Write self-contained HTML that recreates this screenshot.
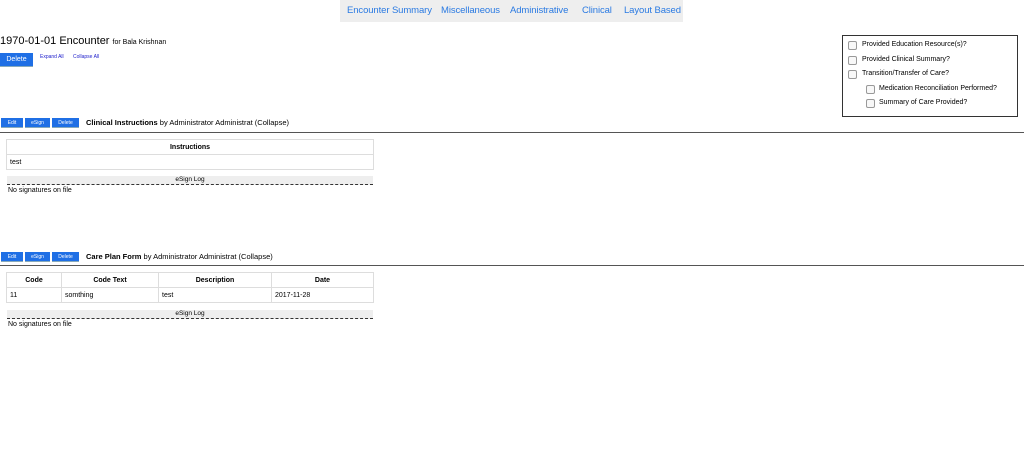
<!DOCTYPE html>
<html><head><style>
body{margin:0;width:1024px;height:459px;background:#fff;font-family:"Liberation Sans",sans-serif;color:#000;position:relative;overflow:hidden}
.a{position:absolute;white-space:nowrap}
.nav{left:340px;top:0;width:343px;height:22px;background:#eee}
.nav span{position:absolute;top:5px;font-size:9.5px;color:#2a7ae2;letter-spacing:-0.1px}
.btn{position:absolute;background:#1f6fe5;color:#fff;font-size:5px;text-align:center;line-height:10px;height:9px;border-bottom:1px solid #8ab}
.hr{position:absolute;left:0;width:1024px;height:1px;background:#555}
table{position:absolute;border-collapse:collapse;font-size:7px}
td,th{border:1px solid #ddd;padding:0 3px;height:14px}
th{font-weight:bold;text-align:center}
.log{position:absolute;left:7px;width:366px;height:8px;background:#eee;border-bottom:1px dashed #333;font-size:6.5px;text-align:center;line-height:8px}
.cb{position:absolute;width:7px;height:7px;border:1px solid #999;border-radius:2px;background:#f8f8f8}
.cl{position:absolute;font-size:7px;white-space:nowrap}
</style></head><body>
<div class="a nav">
<span style="left:7px">Encounter Summary</span>
<span style="left:101px">Miscellaneous</span>
<span style="left:170px">Administrative</span>
<span style="left:242px">Clinical</span>
<span style="left:284px">Layout Based</span>
</div>
<div class="a" style="left:0;top:35px;font-size:11px">1970-01-01 Encounter <span style="font-size:7px">for Bala Krishnan</span></div>
<div class="btn" style="left:0;top:53px;width:33px;height:13px;line-height:14px;font-size:7px">Delete</div>
<div class="a" style="left:40px;top:54px;font-size:5px;color:#22c">Expand All</div>
<div class="a" style="left:73px;top:54px;font-size:5px;color:#22c">Collapse All</div>

<div class="btn" style="left:1px;top:118px;width:22px">Edit</div>
<div class="btn" style="left:25px;top:118px;width:25px">eSign</div>
<div class="btn" style="left:52px;top:118px;width:27px">Delete</div>
<div class="a" style="left:86px;top:118px;font-size:7.5px"><b>Clinical Instructions</b> by Administrator Administrat (Collapse)</div>
<div class="hr" style="top:132px"></div>
<table style="left:6px;top:139px;width:368px"><tr><th>Instructions</th></tr><tr><td>test</td></tr></table>
<div class="log" style="top:176px">eSign Log</div>
<div class="a" style="left:8px;top:187px;font-size:7px">No signatures on file</div>

<div class="btn" style="left:1px;top:252px;width:22px">Edit</div>
<div class="btn" style="left:25px;top:252px;width:25px">eSign</div>
<div class="btn" style="left:52px;top:252px;width:27px">Delete</div>
<div class="a" style="left:86px;top:252px;font-size:7.5px"><b>Care Plan Form</b> by Administrator Administrat (Collapse)</div>
<div class="hr" style="top:265px"></div>
<table style="left:6px;top:272px;width:368px"><tr><th style="width:48px">Code</th><th style="width:90px">Code Text</th><th style="width:106px">Description</th><th>Date</th></tr><tr><td>11</td><td>somthing</td><td>test</td><td>2017-11-28</td></tr></table>
<div class="log" style="top:310px">eSign Log</div>
<div class="a" style="left:8px;top:321px;font-size:7px">No signatures on file</div>

<div class="a" style="left:842px;top:35px;width:174px;height:80px;border:1px solid #333"></div>
<div class="cb" style="left:848px;top:41px"></div><div class="cl" style="left:862px;top:41px">Provided Education Resource(s)?</div>
<div class="cb" style="left:848px;top:56px"></div><div class="cl" style="left:862px;top:56px">Provided Clinical Summary?</div>
<div class="cb" style="left:848px;top:70px"></div><div class="cl" style="left:862px;top:70px">Transition/Transfer of Care?</div>
<div class="cb" style="left:866px;top:85px"></div><div class="cl" style="left:879px;top:85px">Medication Reconciliation Performed?</div>
<div class="cb" style="left:866px;top:99px"></div><div class="cl" style="left:879px;top:99px">Summary of Care Provided?</div>
</body></html>
